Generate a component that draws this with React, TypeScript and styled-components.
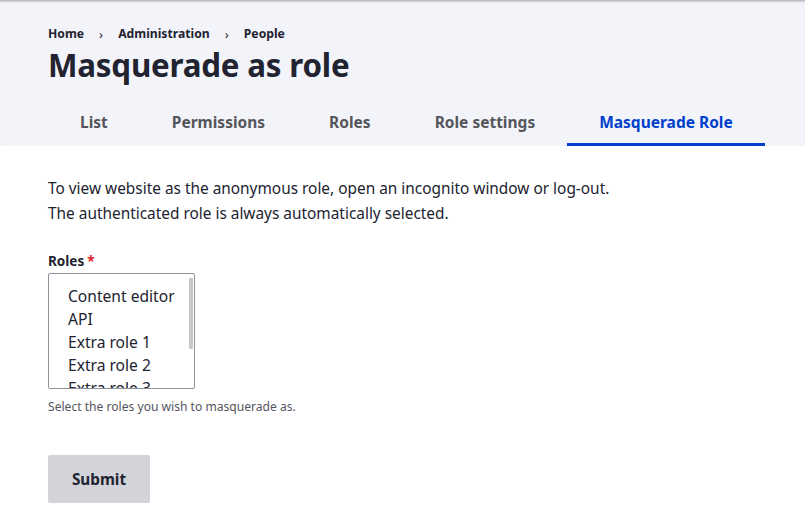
import styled, { createGlobalStyle } from "styled-components";

const GlobalStyle = createGlobalStyle`
  html, body {
    margin: 0;
    padding: 0;
    background: #fff;
    font-family: "Noto Sans", "Open Sans", sans-serif;
    color: #222330;
  }
`;

const Page = styled.div`
  width: 805px;
  min-height: 524px;
  overflow: hidden;
`;

const Header = styled.header`
  background: #f3f4f9;
  padding: 25px 48px 0;
  box-shadow: inset 0 3px 3px -2px rgba(0, 0, 0, 0.35);
`;

const Breadcrumb = styled.nav`
  display: flex;
  align-items: center;
  gap: 14px;
  font-size: 12.2px;
  font-weight: 700;
  line-height: 18px;
  color: #222330;
`;

const Sep = styled.span`
  font-size: 13px;
  font-weight: 400;
  padding: 0 1px;
`;

const Title = styled.h1`
  margin: 2px 0 0;
  font-size: 31.3px;
  font-weight: 700;
  line-height: 40px;
  letter-spacing: -0.2px;
  color: #222330;
`;

const Tabs = styled.ul`
  display: flex;
  list-style: none;
  margin: 15px 0 0;
  padding: 0;
`;

const Tab = styled.li<{ $active?: boolean }>`
  padding: 12px 32px 11px;
  font-size: 15.5px;
  font-weight: 700;
  line-height: 20px;
  color: ${(p) => (p.$active ? "#003ecc" : "#55565b")};
  border-bottom: 3px solid ${(p) => (p.$active ? "#003ecc" : "transparent")};
  white-space: nowrap;
`;

const Main = styled.main`
  padding: 30px 48px 0;
`;

const Intro = styled.p`
  margin: 0 0 25px;
  font-size: 15.4px;
  line-height: 25px;
  color: #222330;
`;

const Field = styled.div`
  display: flex;
  flex-direction: column;
  align-items: flex-start;
`;

const Label = styled.label`
  font-size: 13.5px;
  font-weight: 700;
  line-height: 20px;
  margin-bottom: 2px;
`;

const Required = styled.span`
  color: #dc2323;
  margin-left: 3px;
`;

const ListFrame = styled.div`
  position: relative;
  box-sizing: border-box;
  width: 147px;
  height: 116px;
  border: 1px solid #8e929c;
  border-radius: 2px;
`;

const ListBox = styled.div`
  height: 100%;
  padding: 11px 0 0 19px;
  box-sizing: border-box;
  overflow: hidden;
`;

const Thumb = styled.div`
  position: absolute;
  top: 4px;
  right: 1px;
  width: 4px;
  height: 71px;
  background: #c8c8c8;
  border-radius: 1px;
`;

const Option = styled.div`
  font-size: 15.6px;
  line-height: 23px;
  color: #222330;
  white-space: nowrap;
`;

const Description = styled.div`
  margin-top: 9px;
  font-size: 12.1px;
  line-height: 17px;
  color: #545560;
`;

const Submit = styled.button`
  margin-top: 40px;
  width: 102px;
  height: 48px;
  border: none;
  border-radius: 2px;
  background: #d3d4d9;
  font-family: inherit;
  font-size: 15.3px;
  font-weight: 700;
  color: #222330;
`;

const roles = [
  "Content editor",
  "API",
  "Extra role 1",
  "Extra role 2",
  "Extra role 3",
  "Extra role 4",
  "Extra role 5",
];

const tabs = ["List", "Permissions", "Roles", "Role settings", "Masquerade Role"];

export default function App() {
  return (
    <Page>
      <GlobalStyle />
      <Header>
        <Breadcrumb>
          <span>Home</span>
          <Sep>›</Sep>
          <span>Administration</span>
          <Sep>›</Sep>
          <span>People</span>
        </Breadcrumb>
        <Title>Masquerade as role</Title>
        <Tabs>
          {tabs.map((t) => (
            <Tab key={t} $active={t === "Masquerade Role"}>
              {t}
            </Tab>
          ))}
        </Tabs>
      </Header>
      <Main>
        <Intro>
          To view website as the anonymous role, open an incognito window or log-out.
          <br />
          The authenticated role is always automatically selected.
        </Intro>
        <Field>
          <Label>
            Roles<Required>*</Required>
          </Label>
          <ListFrame>
            <ListBox role="listbox" aria-multiselectable>
              {roles.map((r) => (
                <Option key={r} role="option">
                  {r}
                </Option>
              ))}
            </ListBox>
            <Thumb />
          </ListFrame>
          <Description>Select the roles you wish to masquerade as.</Description>
          <Submit>Submit</Submit>
        </Field>
      </Main>
    </Page>
  );
}
